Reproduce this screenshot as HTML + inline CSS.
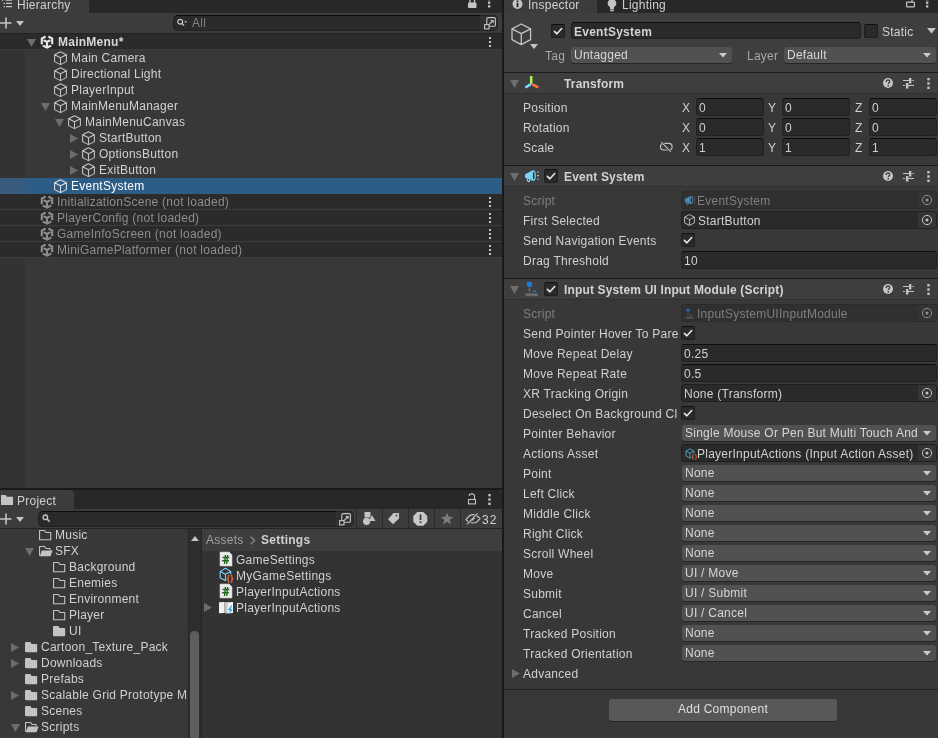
<!DOCTYPE html>
<html><head><meta charset="utf-8"><style>
*{margin:0;padding:0;box-sizing:border-box}
html,body{width:938px;height:738px;overflow:hidden;background:#191919;font-family:"Liberation Sans",sans-serif;font-size:12px;letter-spacing:.25px;color:#d0d0d0}
.a{position:absolute;display:block}
.t{position:absolute;white-space:nowrap;line-height:16px;height:16px;will-change:transform}
</style></head><body>
<div class="a" style="left:0px;top:0px;width:502px;height:488px;background:#383838"></div>
<div class="a" style="left:0px;top:0px;width:502px;height:13px;background:#282828"></div>
<div class="a" style="left:0px;top:0px;width:89px;height:13px;background:#3c3c3c"></div>
<svg class="a" style="left:0px;top:-1px;" width="13" height="10" viewBox="0 0 13 10"><path d="M2 1.2H3.4 M5.6 1.2H12 M3.6 4.4H5 M6 4.4H12 M3.6 7.6H5 M6 7.6H12" stroke="#c4c4c4" stroke-width="1.2"/></svg>
<div class="t" style="left:17px;top:-3px;">Hierarchy</div>
<svg class="a" style="left:468px;top:0px;" width="9" height="8" viewBox="0 0 9 8"><rect x="0" y="2.5" width="8.5" height="5.5" rx="1" fill="#c4c4c4"/><path d="M2 3V0 M6.5 3V0" stroke="#c4c4c4" stroke-width="1.3"/></svg>
<svg class="a" style="left:488px;top:-2px;" width="3" height="10" viewBox="0 0 3 10"><rect x="0" y="0" width="2.3" height="2.3" fill="#c4c4c4"/><rect x="0" y="3.6" width="2.3" height="2.3" fill="#c4c4c4"/><rect x="0" y="7.2" width="2.3" height="2.3" fill="#c4c4c4"/></svg>
<div class="a" style="left:0px;top:13px;width:502px;height:20px;background:#3c3c3c"></div>
<div class="a" style="left:0px;top:33px;width:502px;height:1px;background:#232323"></div>
<svg class="a" style="left:0px;top:17px;" width="12" height="12" viewBox="0 0 12 12"><path d="M6 0.5V11.5 M0 6H11.5" stroke="#c4c4c4" stroke-width="1.6"/></svg>
<svg class="a" style="left:16px;top:21px;" width="8" height="5" viewBox="0 0 8 5"><path d="M0 0H8L4 5Z" fill="#c4c4c4"/></svg>
<div class="a" style="left:173px;top:15px;width:308px;height:16px;background:#2a2a2a;border:1px solid #212121;border-top-color:#0d0d0d;border-right:none;border-radius:5px 0 0 5px"></div>
<div class="a" style="left:480px;top:15px;width:18px;height:16px;background:#303030;border:1px solid #222;border-left:none;border-radius:0 5px 5px 0"></div>
<svg class="a" style="left:177px;top:18px;" width="11" height="10" viewBox="0 0 11 10"><circle cx="3.2" cy="3.7" r="2.4" fill="none" stroke="#c4c4c4" stroke-width="1.3"/><path d="M4.8 5.3L7 7.6" stroke="#c4c4c4" stroke-width="1.4"/><path d="M7.2 3.2H10.2L8.7 4.9Z" fill="#c4c4c4"/></svg>
<div class="t" style="left:192px;top:15px;color:#808080">All</div>
<svg class="a" style="left:482px;top:15px;" width="16" height="16" viewBox="0 0 16 16"><rect x="4.8" y="2.6" width="8.6" height="8.6" rx="1.3" fill="none" stroke="#c4c4c4" stroke-width="1.1"/><rect x="2.6" y="9.6" width="4.4" height="4.3" fill="#303030" stroke="#c4c4c4" stroke-width="1.1"/><path d="M7 9.6L10.6 6" stroke="#c4c4c4" stroke-width="1.1"/><path d="M8.2 4.9H11.7V8.4Z" fill="#c4c4c4"/></svg>
<div class="a" style="left:0px;top:34px;width:502px;height:15px;background:#2a2a2a"></div>
<div class="a" style="left:0px;top:49px;width:502px;height:1px;background:#3b3b3b"></div>
<svg class="a" style="left:27px;top:39px;" width="9" height="8" viewBox="0 0 9 8"><path d="M0 0H9L4.5 8Z" fill="#6d6d6d"/></svg>
<svg class="a" style="left:38px;top:34px;" width="18" height="17" viewBox="0 0 18 17"><path d="M7.6 2.5L3.8 4.7V10.2 M10.4 2.5L14.2 4.7V10.2 M4.8 11.6L9 13.5L13.2 11.6 M5.6 6.1L9 8L12.4 6.1 M9 8V13" fill="none" stroke="#e8e8e8" stroke-width="2.1" stroke-linejoin="miter"/></svg>
<div class="t" style="left:58px;top:34px;font-weight:bold;color:#d8d8d8">MainMenu*</div>
<svg class="a" style="left:489px;top:37px;" width="2" height="10" viewBox="0 0 2 10"><rect x="0" y="0" width="2" height="2" fill="#c4c4c4"/><rect x="0" y="4" width="2" height="2" fill="#c4c4c4"/><rect x="0" y="8" width="2" height="2" fill="#c4c4c4"/></svg>
<div class="a" style="left:0px;top:50px;width:25px;height:438px;background:#333333"></div>
<svg class="a" style="left:54px;top:51px;" width="14" height="15" viewBox="0 0 14 15"><path d="M6.5 0.7L12.4 3.7V10.6L6.5 13.6L0.6 10.6V3.7Z M0.6 3.7L6.5 6.7L12.4 3.7 M6.5 6.7V13.6" fill="none" stroke="#c4c4c4" stroke-width="1.05" stroke-linejoin="round"/></svg>
<div class="t" style="left:71px;top:50px;">Main Camera</div>
<svg class="a" style="left:54px;top:67px;" width="14" height="15" viewBox="0 0 14 15"><path d="M6.5 0.7L12.4 3.7V10.6L6.5 13.6L0.6 10.6V3.7Z M0.6 3.7L6.5 6.7L12.4 3.7 M6.5 6.7V13.6" fill="none" stroke="#c4c4c4" stroke-width="1.05" stroke-linejoin="round"/></svg>
<div class="t" style="left:71px;top:66px;">Directional Light</div>
<svg class="a" style="left:54px;top:83px;" width="14" height="15" viewBox="0 0 14 15"><path d="M6.5 0.7L12.4 3.7V10.6L6.5 13.6L0.6 10.6V3.7Z M0.6 3.7L6.5 6.7L12.4 3.7 M6.5 6.7V13.6" fill="none" stroke="#c4c4c4" stroke-width="1.05" stroke-linejoin="round"/></svg>
<div class="t" style="left:71px;top:82px;">PlayerInput</div>
<svg class="a" style="left:41px;top:103px;" width="9" height="8" viewBox="0 0 9 8"><path d="M0 0H9L4.5 8Z" fill="#6d6d6d"/></svg>
<svg class="a" style="left:54px;top:99px;" width="14" height="15" viewBox="0 0 14 15"><path d="M6.5 0.7L12.4 3.7V10.6L6.5 13.6L0.6 10.6V3.7Z M0.6 3.7L6.5 6.7L12.4 3.7 M6.5 6.7V13.6" fill="none" stroke="#c4c4c4" stroke-width="1.05" stroke-linejoin="round"/></svg>
<div class="t" style="left:71px;top:98px;">MainMenuManager</div>
<svg class="a" style="left:55px;top:119px;" width="9" height="8" viewBox="0 0 9 8"><path d="M0 0H9L4.5 8Z" fill="#6d6d6d"/></svg>
<svg class="a" style="left:68px;top:115px;" width="14" height="15" viewBox="0 0 14 15"><path d="M6.5 0.7L12.4 3.7V10.6L6.5 13.6L0.6 10.6V3.7Z M0.6 3.7L6.5 6.7L12.4 3.7 M6.5 6.7V13.6" fill="none" stroke="#c4c4c4" stroke-width="1.05" stroke-linejoin="round"/></svg>
<div class="t" style="left:85px;top:114px;">MainMenuCanvas</div>
<svg class="a" style="left:70px;top:134px;" width="8" height="9" viewBox="0 0 8 9"><path d="M0 0L8 4.5L0 9Z" fill="#6d6d6d"/></svg>
<svg class="a" style="left:82px;top:131px;" width="14" height="15" viewBox="0 0 14 15"><path d="M6.5 0.7L12.4 3.7V10.6L6.5 13.6L0.6 10.6V3.7Z M0.6 3.7L6.5 6.7L12.4 3.7 M6.5 6.7V13.6" fill="none" stroke="#c4c4c4" stroke-width="1.05" stroke-linejoin="round"/></svg>
<div class="t" style="left:99px;top:130px;">StartButton</div>
<svg class="a" style="left:70px;top:150px;" width="8" height="9" viewBox="0 0 8 9"><path d="M0 0L8 4.5L0 9Z" fill="#6d6d6d"/></svg>
<svg class="a" style="left:82px;top:147px;" width="14" height="15" viewBox="0 0 14 15"><path d="M6.5 0.7L12.4 3.7V10.6L6.5 13.6L0.6 10.6V3.7Z M0.6 3.7L6.5 6.7L12.4 3.7 M6.5 6.7V13.6" fill="none" stroke="#c4c4c4" stroke-width="1.05" stroke-linejoin="round"/></svg>
<div class="t" style="left:99px;top:146px;">OptionsButton</div>
<svg class="a" style="left:70px;top:166px;" width="8" height="9" viewBox="0 0 8 9"><path d="M0 0L8 4.5L0 9Z" fill="#6d6d6d"/></svg>
<svg class="a" style="left:82px;top:163px;" width="14" height="15" viewBox="0 0 14 15"><path d="M6.5 0.7L12.4 3.7V10.6L6.5 13.6L0.6 10.6V3.7Z M0.6 3.7L6.5 6.7L12.4 3.7 M6.5 6.7V13.6" fill="none" stroke="#c4c4c4" stroke-width="1.05" stroke-linejoin="round"/></svg>
<div class="t" style="left:99px;top:162px;">ExitButton</div>
<div class="a" style="left:25px;top:178px;width:477px;height:16px;background:#2c5d87"></div>
<div class="a" style="left:0px;top:178px;width:25px;height:16px;background:#3a5b80"></div>
<svg class="a" style="left:54px;top:179px;" width="14" height="15" viewBox="0 0 14 15"><path d="M6.5 0.7L12.4 3.7V10.6L6.5 13.6L0.6 10.6V3.7Z M0.6 3.7L6.5 6.7L12.4 3.7 M6.5 6.7V13.6" fill="none" stroke="#e0e0e0" stroke-width="1.05" stroke-linejoin="round"/></svg>
<div class="t" style="left:71px;top:178px;color:#ffffff">EventSystem</div>
<div class="a" style="left:0px;top:194px;width:502px;height:16px;background:#2b2b2b"></div>
<div class="a" style="left:0px;top:209px;width:502px;height:1px;background:#3d3d3d"></div>
<svg class="a" style="left:38px;top:194px;" width="18" height="17" viewBox="0 0 18 17"><path d="M7.6 2.5L3.8 4.7V10.2 M10.4 2.5L14.2 4.7V10.2 M4.8 11.6L9 13.5L13.2 11.6 M5.6 6.1L9 8L12.4 6.1 M9 8V13" fill="none" stroke="#8d8d8d" stroke-width="2.1" stroke-linejoin="miter"/></svg>
<div class="t" style="left:57px;top:194px;color:#8d8d8d">InitializationScene (not loaded)</div>
<svg class="a" style="left:489px;top:197px;" width="2" height="10" viewBox="0 0 2 10"><rect x="0" y="0" width="2" height="2" fill="#c4c4c4"/><rect x="0" y="4" width="2" height="2" fill="#c4c4c4"/><rect x="0" y="8" width="2" height="2" fill="#c4c4c4"/></svg>
<div class="a" style="left:0px;top:210px;width:502px;height:16px;background:#2b2b2b"></div>
<div class="a" style="left:0px;top:225px;width:502px;height:1px;background:#3d3d3d"></div>
<svg class="a" style="left:38px;top:210px;" width="18" height="17" viewBox="0 0 18 17"><path d="M7.6 2.5L3.8 4.7V10.2 M10.4 2.5L14.2 4.7V10.2 M4.8 11.6L9 13.5L13.2 11.6 M5.6 6.1L9 8L12.4 6.1 M9 8V13" fill="none" stroke="#8d8d8d" stroke-width="2.1" stroke-linejoin="miter"/></svg>
<div class="t" style="left:57px;top:210px;color:#8d8d8d">PlayerConfig (not loaded)</div>
<svg class="a" style="left:489px;top:213px;" width="2" height="10" viewBox="0 0 2 10"><rect x="0" y="0" width="2" height="2" fill="#c4c4c4"/><rect x="0" y="4" width="2" height="2" fill="#c4c4c4"/><rect x="0" y="8" width="2" height="2" fill="#c4c4c4"/></svg>
<div class="a" style="left:0px;top:226px;width:502px;height:16px;background:#2b2b2b"></div>
<div class="a" style="left:0px;top:241px;width:502px;height:1px;background:#3d3d3d"></div>
<svg class="a" style="left:38px;top:226px;" width="18" height="17" viewBox="0 0 18 17"><path d="M7.6 2.5L3.8 4.7V10.2 M10.4 2.5L14.2 4.7V10.2 M4.8 11.6L9 13.5L13.2 11.6 M5.6 6.1L9 8L12.4 6.1 M9 8V13" fill="none" stroke="#8d8d8d" stroke-width="2.1" stroke-linejoin="miter"/></svg>
<div class="t" style="left:57px;top:226px;color:#8d8d8d">GameInfoScreen (not loaded)</div>
<svg class="a" style="left:489px;top:229px;" width="2" height="10" viewBox="0 0 2 10"><rect x="0" y="0" width="2" height="2" fill="#c4c4c4"/><rect x="0" y="4" width="2" height="2" fill="#c4c4c4"/><rect x="0" y="8" width="2" height="2" fill="#c4c4c4"/></svg>
<div class="a" style="left:0px;top:242px;width:502px;height:16px;background:#2b2b2b"></div>
<div class="a" style="left:0px;top:257px;width:502px;height:1px;background:#3d3d3d"></div>
<svg class="a" style="left:38px;top:242px;" width="18" height="17" viewBox="0 0 18 17"><path d="M7.6 2.5L3.8 4.7V10.2 M10.4 2.5L14.2 4.7V10.2 M4.8 11.6L9 13.5L13.2 11.6 M5.6 6.1L9 8L12.4 6.1 M9 8V13" fill="none" stroke="#8d8d8d" stroke-width="2.1" stroke-linejoin="miter"/></svg>
<div class="t" style="left:57px;top:242px;color:#8d8d8d">MiniGamePlatformer (not loaded)</div>
<svg class="a" style="left:489px;top:245px;" width="2" height="10" viewBox="0 0 2 10"><rect x="0" y="0" width="2" height="2" fill="#c4c4c4"/><rect x="0" y="4" width="2" height="2" fill="#c4c4c4"/><rect x="0" y="8" width="2" height="2" fill="#c4c4c4"/></svg>
<div class="a" style="left:502px;top:0px;width:2px;height:738px;background:#191919"></div>
<div class="a" style="left:0px;top:488px;width:502px;height:2px;background:#191919"></div>
<div class="a" style="left:0px;top:490px;width:502px;height:248px;background:#383838"></div>
<div class="a" style="left:0px;top:490px;width:502px;height:19px;background:#282828;border-radius:0 4px 0 0"></div>
<div class="a" style="left:0px;top:490px;width:74px;height:19px;background:#3c3c3c;border-radius:0 4px 0 0"></div>
<svg class="a" style="left:1px;top:495px;" width="12" height="10" viewBox="0 0 12 10"><path d="M0 0H4.5L6 1.8H12V10H0Z" fill="#c4c4c4"/></svg>
<div class="t" style="left:17px;top:493px;">Project</div>
<svg class="a" style="left:466px;top:493px;" width="11" height="12" viewBox="0 0 11 12"><path d="M3.3 2.9V2.6C3.3 1.4 4.3 0.9 5.5 0.9C6.7 0.9 8.5 1.4 8.5 2.9V6" fill="none" stroke="#c4c4c4" stroke-width="1.1"/><rect x="2.5" y="6.5" width="7" height="4.4" fill="none" stroke="#c4c4c4" stroke-width="1.1"/></svg>
<svg class="a" style="left:488px;top:494px;" width="3" height="11" viewBox="0 0 3 11"><rect x="0.3" y="0" width="2.4" height="2.4" fill="#c4c4c4"/><rect x="0.3" y="4.3" width="2.4" height="2.4" fill="#c4c4c4"/><rect x="0.3" y="8.6" width="2.4" height="2.4" fill="#c4c4c4"/></svg>
<div class="a" style="left:0px;top:529px;width:188px;height:209px;background:#383838"></div>
<svg class="a" style="left:39px;top:530px;" width="13" height="11" viewBox="0 0 13 11"><path d="M0.55 0.55H5.6L7 2.55H11.75V9.75H0.55Z" fill="none" stroke="#c4c4c4" stroke-width="1.1" stroke-linejoin="round"/></svg>
<div class="t" style="left:55px;top:527px;">Music</div>
<svg class="a" style="left:25px;top:548px;" width="9" height="8" viewBox="0 0 9 8"><path d="M0 0H9L4.5 8Z" fill="#6d6d6d"/></svg>
<svg class="a" style="left:39px;top:546px;" width="14" height="11" viewBox="0 0 14 11"><path d="M0.55 9.8V0.55H5.6L7 2.55H11V4.3" fill="none" stroke="#c4c4c4" stroke-width="1.1" stroke-linejoin="round"/><path d="M0.8 10.2L2.9 4.6H13.6L11.5 10.2Z" fill="#c4c4c4"/></svg>
<div class="t" style="left:55px;top:543px;">SFX</div>
<svg class="a" style="left:53px;top:562px;" width="13" height="11" viewBox="0 0 13 11"><path d="M0.55 0.55H5.6L7 2.55H11.75V9.75H0.55Z" fill="none" stroke="#c4c4c4" stroke-width="1.1" stroke-linejoin="round"/></svg>
<div class="t" style="left:69px;top:559px;">Background</div>
<svg class="a" style="left:53px;top:578px;" width="13" height="11" viewBox="0 0 13 11"><path d="M0.55 0.55H5.6L7 2.55H11.75V9.75H0.55Z" fill="none" stroke="#c4c4c4" stroke-width="1.1" stroke-linejoin="round"/></svg>
<div class="t" style="left:69px;top:575px;">Enemies</div>
<svg class="a" style="left:53px;top:594px;" width="13" height="11" viewBox="0 0 13 11"><path d="M0.55 0.55H5.6L7 2.55H11.75V9.75H0.55Z" fill="none" stroke="#c4c4c4" stroke-width="1.1" stroke-linejoin="round"/></svg>
<div class="t" style="left:69px;top:591px;">Environment</div>
<svg class="a" style="left:53px;top:610px;" width="13" height="11" viewBox="0 0 13 11"><path d="M0.55 0.55H5.6L7 2.55H11.75V9.75H0.55Z" fill="none" stroke="#c4c4c4" stroke-width="1.1" stroke-linejoin="round"/></svg>
<div class="t" style="left:69px;top:607px;">Player</div>
<svg class="a" style="left:53px;top:626px;" width="13" height="11" viewBox="0 0 13 11"><path d="M1 0H5.4L6.6 2H11.2Q12.2 2 12.2 3V9.2Q12.2 10.2 11.2 10.2H1Q0 10.2 0 9.2V1Q0 0 1 0Z" fill="#c4c4c4"/></svg>
<div class="t" style="left:69px;top:623px;">UI</div>
<svg class="a" style="left:11px;top:643px;" width="8" height="9" viewBox="0 0 8 9"><path d="M0 0L8 4.5L0 9Z" fill="#6d6d6d"/></svg>
<svg class="a" style="left:25px;top:642px;" width="13" height="11" viewBox="0 0 13 11"><path d="M1 0H5.4L6.6 2H11.2Q12.2 2 12.2 3V9.2Q12.2 10.2 11.2 10.2H1Q0 10.2 0 9.2V1Q0 0 1 0Z" fill="#c4c4c4"/></svg>
<div class="t" style="left:41px;top:639px;">Cartoon_Texture_Pack</div>
<svg class="a" style="left:11px;top:659px;" width="8" height="9" viewBox="0 0 8 9"><path d="M0 0L8 4.5L0 9Z" fill="#6d6d6d"/></svg>
<svg class="a" style="left:25px;top:658px;" width="13" height="11" viewBox="0 0 13 11"><path d="M1 0H5.4L6.6 2H11.2Q12.2 2 12.2 3V9.2Q12.2 10.2 11.2 10.2H1Q0 10.2 0 9.2V1Q0 0 1 0Z" fill="#c4c4c4"/></svg>
<div class="t" style="left:41px;top:655px;">Downloads</div>
<svg class="a" style="left:25px;top:674px;" width="13" height="11" viewBox="0 0 13 11"><path d="M1 0H5.4L6.6 2H11.2Q12.2 2 12.2 3V9.2Q12.2 10.2 11.2 10.2H1Q0 10.2 0 9.2V1Q0 0 1 0Z" fill="#c4c4c4"/></svg>
<div class="t" style="left:41px;top:671px;">Prefabs</div>
<svg class="a" style="left:11px;top:691px;" width="8" height="9" viewBox="0 0 8 9"><path d="M0 0L8 4.5L0 9Z" fill="#6d6d6d"/></svg>
<svg class="a" style="left:25px;top:690px;" width="13" height="11" viewBox="0 0 13 11"><path d="M1 0H5.4L6.6 2H11.2Q12.2 2 12.2 3V9.2Q12.2 10.2 11.2 10.2H1Q0 10.2 0 9.2V1Q0 0 1 0Z" fill="#c4c4c4"/></svg>
<div class="t" style="left:41px;top:687px;">Scalable Grid Prototype M</div>
<svg class="a" style="left:25px;top:706px;" width="13" height="11" viewBox="0 0 13 11"><path d="M1 0H5.4L6.6 2H11.2Q12.2 2 12.2 3V9.2Q12.2 10.2 11.2 10.2H1Q0 10.2 0 9.2V1Q0 0 1 0Z" fill="#c4c4c4"/></svg>
<div class="t" style="left:41px;top:703px;">Scenes</div>
<svg class="a" style="left:11px;top:724px;" width="9" height="8" viewBox="0 0 9 8"><path d="M0 0H9L4.5 8Z" fill="#6d6d6d"/></svg>
<svg class="a" style="left:25px;top:722px;" width="14" height="11" viewBox="0 0 14 11"><path d="M0.55 9.8V0.55H5.6L7 2.55H11V4.3" fill="none" stroke="#c4c4c4" stroke-width="1.1" stroke-linejoin="round"/><path d="M0.8 10.2L2.9 4.6H13.6L11.5 10.2Z" fill="#c4c4c4"/></svg>
<div class="t" style="left:41px;top:719px;">Scripts</div>
<div class="a" style="left:188px;top:529px;width:13px;height:209px;background:#2e2e2e;border-left:1px solid #262626"></div>
<svg class="a" style="left:191px;top:536px;" width="8" height="5" viewBox="0 0 8 5"><path d="M0 5H8L4 0Z" fill="#c4c4c4"/></svg>
<div class="a" style="left:190px;top:631px;width:9px;height:110px;background:#5e5e5e;border-radius:5px"></div>
<div class="a" style="left:201px;top:529px;width:1px;height:209px;background:#232323"></div>
<div class="a" style="left:202px;top:529px;width:300px;height:209px;background:#333333"></div>
<div class="a" style="left:202px;top:529px;width:300px;height:22px;background:#3e3e3e"></div>
<div class="t" style="left:206px;top:532px;color:#a0a0a0">Assets</div>
<svg class="a" style="left:250px;top:536px;" width="6" height="9" viewBox="0 0 6 9"><path d="M0.7 0.7L4.7 4.5L0.7 8.3" fill="none" stroke="#8a8a8a" stroke-width="1.2"/></svg>
<div class="t" style="left:261px;top:532px;font-weight:bold;color:#d0d0d0">Settings</div>
<svg class="a" style="left:216px;top:550px;" width="20" height="18" viewBox="0 0 20 18"><path d="M4.2 2.2H13.2L15.8 4.9V15.8H4.2Z" fill="#ebebeb" stroke="#f8f8f8" stroke-width="0.8" stroke-linejoin="round"/><path d="M9.4 5L8.5 14 M11.6 5L10.7 14 M6.6 7.5H13.3 M6.2 10.7H12.8" stroke="#1b661b" stroke-width="1.35"/></svg>
<div class="t" style="left:236px;top:552px;">GameSettings</div>
<svg class="a" style="left:216px;top:566px;" width="22" height="18" viewBox="0 0 22 18"><path d="M9.5 2.3L14.7 5.4V12L9.5 14.6L4.2 12V5.4Z M4.2 5.4L9.5 8.3L14.7 5.4 M9.5 8.3V14.6" fill="none" stroke="#7dd3f7" stroke-width="1.1" stroke-linejoin="round"/><rect x="10.4" y="8.2" width="8.4" height="9" fill="#333333"/><path d="M13.5 9.2H13C12.5 9.2 12.3 9.5 12.3 10.1V11.9L11.4 12.7L12.3 13.5V15.3C12.3 15.9 12.5 16.2 13 16.2H13.5 M14.7 9.2H15.2C15.7 9.2 15.9 9.5 15.9 10.1V11.9L16.8 12.7L15.9 13.5V15.3C15.9 15.9 15.7 16.2 15.2 16.2H14.7" fill="none" stroke="#f26b3a" stroke-width="1.2"/></svg>
<div class="t" style="left:236px;top:568px;">MyGameSettings</div>
<svg class="a" style="left:216px;top:582px;" width="20" height="18" viewBox="0 0 20 18"><path d="M4.2 2.2H13.2L15.8 4.9V15.8H4.2Z" fill="#ebebeb" stroke="#f8f8f8" stroke-width="0.8" stroke-linejoin="round"/><path d="M9.4 5L8.5 14 M11.6 5L10.7 14 M6.6 7.5H13.3 M6.2 10.7H12.8" stroke="#1b661b" stroke-width="1.35"/></svg>
<div class="t" style="left:236px;top:584px;">PlayerInputActions</div>
<svg class="a" style="left:214px;top:599px;" width="22" height="18" viewBox="0 0 22 18"><defs><linearGradient id="mg" x1="0" x2="1"><stop offset="0" stop-color="#a8a8a8"/><stop offset="1" stop-color="#e0e0e0"/></linearGradient></defs><path d="M5 3.2L10 2.9V14L5 14.2Z" fill="#f2f2f2"/><path d="M10 2.9L14 3.3V14.4L10 14Z" fill="url(#mg)"/><path d="M14 3.3L19 2.9V14L14 14.4Z" fill="#f4f4f4"/><path d="M17.2 6.6L13.9 11L16.1 11.3L15 15.2L18.6 10.3L16.5 10L18.2 6.6Z" fill="#1ea5dc"/></svg>
<svg class="a" style="left:204px;top:603px;" width="8" height="9" viewBox="0 0 8 9"><path d="M0 0L8 4.5L0 9Z" fill="#6d6d6d"/></svg>
<div class="t" style="left:236px;top:600px;">PlayerInputActions</div>
<div class="a" style="left:0px;top:509px;width:502px;height:20px;background:#3c3c3c"></div>
<div class="a" style="left:0px;top:528px;width:502px;height:1px;background:#242424"></div>
<svg class="a" style="left:0px;top:513px;" width="12" height="12" viewBox="0 0 12 12"><path d="M6 0.5V11.5 M0 6H11.5" stroke="#c4c4c4" stroke-width="1.6"/></svg>
<svg class="a" style="left:16px;top:517px;" width="8" height="5" viewBox="0 0 8 5"><path d="M0 0H8L4 5Z" fill="#c4c4c4"/></svg>
<div class="a" style="left:38px;top:511px;width:299px;height:16px;background:#2a2a2a;border:1px solid #212121;border-top-color:#0d0d0d;border-right:none;border-radius:5px 0 0 5px"></div>
<div class="a" style="left:336px;top:511px;width:18px;height:16px;background:#303030;border:1px solid #222;border-left:none;border-radius:0 5px 5px 0"></div>
<svg class="a" style="left:42px;top:514px;" width="9" height="9" viewBox="0 0 9 9"><circle cx="3.3" cy="3.3" r="2.3" fill="none" stroke="#c4c4c4" stroke-width="1.3"/><path d="M4.9 4.9L7.6 7.6" stroke="#c4c4c4" stroke-width="1.5"/></svg>
<svg class="a" style="left:337px;top:511px;" width="16" height="16" viewBox="0 0 16 16"><rect x="4.8" y="2.6" width="8.6" height="8.6" rx="1.3" fill="none" stroke="#c4c4c4" stroke-width="1.1"/><rect x="2.6" y="9.6" width="4.4" height="4.3" fill="#303030" stroke="#c4c4c4" stroke-width="1.1"/><path d="M7 9.6L10.6 6" stroke="#c4c4c4" stroke-width="1.1"/><path d="M8.2 4.9H11.7V8.4Z" fill="#c4c4c4"/></svg>
<div class="a" style="left:356px;top:509px;width:1px;height:20px;background:#2a2a2a"></div>
<div class="a" style="left:382px;top:509px;width:1px;height:20px;background:#2a2a2a"></div>
<div class="a" style="left:408px;top:509px;width:1px;height:20px;background:#2a2a2a"></div>
<div class="a" style="left:434px;top:509px;width:1px;height:20px;background:#2a2a2a"></div>
<div class="a" style="left:460px;top:509px;width:1px;height:20px;background:#2a2a2a"></div>
<svg class="a" style="left:363px;top:511px;" width="14" height="15" viewBox="0 0 14 15"><rect x="1.5" y="1" width="6" height="5.5" fill="#c4c4c4"/><circle cx="3.6" cy="10.3" r="3.6" fill="#c4c4c4"/><path d="M9 4.2L12.5 10H5.8Z" fill="#c4c4c4"/></svg>
<svg class="a" style="left:388px;top:512px;" width="12" height="13" viewBox="0 0 12 13"><path d="M5.5 1H11V6.5L5 12.3L0 7.3Z" fill="#c4c4c4"/><circle cx="8.5" cy="3.5" r="0.9" fill="#3c3c3c"/></svg>
<svg class="a" style="left:413px;top:511px;" width="15" height="15" viewBox="0 0 15 15"><path d="M4.3 1H10.3L14.3 5V10.8L10.3 14.8H4.3L0.3 10.8V5Z" fill="#c8c8c8"/><rect x="6.6" y="3.5" width="1.8" height="5.5" fill="#3c3c3c"/><rect x="6.6" y="10.3" width="1.8" height="1.8" fill="#3c3c3c"/></svg>
<svg class="a" style="left:440px;top:512px;" width="14" height="13" viewBox="0 0 14 13"><path d="M7 0.5L8.7 4.8L13.3 5L9.7 7.9L11 12.4L7 9.8L3 12.4L4.3 7.9L0.7 5L5.3 4.8Z" fill="#7c7c7c"/></svg>
<svg class="a" style="left:465px;top:512px;" width="16" height="14" viewBox="0 0 16 14"><path d="M1 7.6C3 4.6 5.6 2.6 8.2 2.6C10.6 2.6 13 4.4 15 6.6C13 9.2 10.6 11 8.2 11C5.6 11 3 9.8 1 7.6Z" fill="none" stroke="#c4c4c4" stroke-width="1.1"/><path d="M2 12.4L12.6 1.3" stroke="#3c3c3c" stroke-width="2.4"/><path d="M2 12.4L12.6 1.3" stroke="#c4c4c4" stroke-width="1.1"/><path d="M6.6 8.6L9.4 6" stroke="#c4c4c4" stroke-width="1.3"/></svg>
<div class="t" style="left:482px;top:512px;letter-spacing:1.2px">32</div>
<div class="a" style="left:504px;top:0px;width:434px;height:738px;background:#383838"></div>
<div class="a" style="left:504px;top:0px;width:434px;height:13px;background:#282828"></div>
<div class="a" style="left:504px;top:0px;width:93px;height:13px;background:#3c3c3c"></div>
<svg class="a" style="left:512px;top:-1px;" width="11" height="11" viewBox="0 0 11 11"><circle cx="5.5" cy="5" r="5" fill="#c4c4c4"/><rect x="4.6" y="4" width="1.8" height="4.2" fill="#282828"/><rect x="4.6" y="1.5" width="1.8" height="1.7" fill="#282828"/></svg>
<div class="t" style="left:528px;top:-3px;">Inspector</div>
<svg class="a" style="left:607px;top:-1px;" width="10" height="13" viewBox="0 0 10 13"><circle cx="5" cy="4.3" r="4.3" fill="#c4c4c4"/><rect x="3" y="7" width="4" height="3.5" fill="#c4c4c4"/><rect x="3.3" y="11" width="3.4" height="1.3" fill="#c4c4c4"/></svg>
<div class="t" style="left:622px;top:-3px;">Lighting</div>
<svg class="a" style="left:906px;top:-1px;" width="9" height="9" viewBox="0 0 9 9"><path d="M6 3V0" stroke="#c4c4c4" stroke-width="1.2"/><rect x="0.6" y="3.2" width="7.8" height="4.6" rx="0.6" fill="none" stroke="#c4c4c4" stroke-width="1.2"/></svg>
<svg class="a" style="left:926px;top:-2px;" width="3" height="10" viewBox="0 0 3 10"><rect x="0" y="0" width="2.3" height="2.3" fill="#c4c4c4"/><rect x="0" y="3.6" width="2.3" height="2.3" fill="#c4c4c4"/><rect x="0" y="7.2" width="2.3" height="2.3" fill="#c4c4c4"/></svg>
<div class="a" style="left:504px;top:13px;width:434px;height:59px;background:#3e3e3e"></div>
<svg class="a" style="left:511px;top:23px;" width="21" height="23" viewBox="0 0 21 23"><path d="M10.3 1L19.6 5.8V16.6L10.3 21.6L1 16.6V5.8Z M1 5.8L10.3 10.7L19.6 5.8 M10.3 10.7V21.6" fill="none" stroke="#c4c4c4" stroke-width="1.3" stroke-linejoin="round"/></svg>
<svg class="a" style="left:530px;top:44px;" width="9" height="5" viewBox="0 0 9 5"><path d="M0 0H8L4 5Z" fill="#c4c4c4"/></svg>
<div class="a" style="left:551px;top:24px;width:14px;height:14px;background:#2a2a2a;border:1px solid #1e1e1e;border-top-color:#0f0f0f;border-radius:2px"></div>
<svg class="a" style="left:551px;top:24px;" width="14" height="14" viewBox="0 0 14 14"><path d="M3.4 7.4L5.9 9.8L10.7 4.5" fill="none" stroke="#e4e4e4" stroke-width="1.6" stroke-linecap="round" stroke-linejoin="round"/></svg>
<div class="a" style="left:571px;top:22px;width:290px;height:17px;background:#2a2a2a;border:1px solid #212121;border-top-color:#0d0d0d;border-radius:3px"></div>
<div class="t" style="left:574px;top:24px;font-weight:bold;color:#d2d2d2">EventSystem</div>
<div class="a" style="left:864px;top:24px;width:14px;height:14px;background:#2a2a2a;border:1px solid #1e1e1e;border-top-color:#0f0f0f;border-radius:2px"></div>
<div class="t" style="left:882px;top:24px;">Static</div>
<svg class="a" style="left:927px;top:28px;" width="9" height="6" viewBox="0 0 9 6"><path d="M0 0H9L4.5 5.5Z" fill="#c4c4c4"/></svg>
<div class="t" style="left:545px;top:48px;color:#a8a8a8">Tag</div>
<div class="a" style="left:571px;top:47px;width:161px;height:16px;background:#515151;border-radius:3px;box-shadow:0 1px 0 #262626"></div>
<div class="t" style="left:574px;top:47px;color:#d6d6d6">Untagged</div>
<svg class="a" style="left:719px;top:53px;" width="8" height="5" viewBox="0 0 8 5"><path d="M0 0H8L4 4.6Z" fill="#cccccc"/></svg>
<div class="t" style="left:747px;top:48px;color:#a8a8a8">Layer</div>
<div class="a" style="left:784px;top:47px;width:152px;height:16px;background:#515151;border-radius:3px;box-shadow:0 1px 0 #262626"></div>
<div class="t" style="left:787px;top:47px;color:#d6d6d6">Default</div>
<svg class="a" style="left:923px;top:53px;" width="8" height="5" viewBox="0 0 8 5"><path d="M0 0H8L4 4.6Z" fill="#cccccc"/></svg>
<div class="a" style="left:504px;top:72px;width:434px;height:1px;background:#1a1a1a"></div>
<div class="a" style="left:504px;top:73px;width:434px;height:20px;background:#3e3e3e"></div>
<div class="a" style="left:504px;top:93px;width:434px;height:1px;background:#2f2f2f"></div>
<svg class="a" style="left:510px;top:80px;" width="9" height="8" viewBox="0 0 9 8"><path d="M0 0H9L4.5 8Z" fill="#6d6d6d"/></svg>
<svg class="a" style="left:525px;top:76px;" width="15" height="13" viewBox="0 0 15 13"><path d="M6.2 0.8V6.8" stroke="#a6f54a" stroke-width="2.6" stroke-linecap="round"/><path d="M1.3 11L5 8.7" stroke="#80d8ff" stroke-width="2.6" stroke-linecap="round"/><path d="M8 8.7L12.4 11" stroke="#ff6e3a" stroke-width="2.6" stroke-linecap="round"/></svg>
<div class="t" style="left:564px;top:76px;font-weight:bold;color:#d2d2d2;letter-spacing:.15px">Transform</div>
<svg class="a" style="left:883px;top:78px;" width="11" height="11" viewBox="0 0 11 11"><circle cx="5" cy="5" r="5" fill="#c4c4c4"/><path d="M3.2 3.9C3.2 2.6 4.1 2 5 2C6 2 6.8 2.6 6.8 3.6C6.8 4.7 5.3 4.8 5.3 6" fill="none" stroke="#3e3e3e" stroke-width="1.3"/><rect x="4.5" y="7" width="1.5" height="1.5" fill="#3e3e3e"/></svg>
<svg class="a" style="left:903px;top:78px;" width="12" height="11" viewBox="0 0 12 11"><path d="M0 2.5H11 M0 7.5H11" stroke="#c4c4c4" stroke-width="1.1"/><rect x="6" y="0" width="2.4" height="5.5" fill="#c4c4c4"/><rect x="3" y="5" width="2.4" height="5.5" fill="#c4c4c4"/><rect x="1.9" y="6.6" width="0.9" height="1.8" fill="#3e3e3e"/><rect x="8.6" y="1.6" width="0.9" height="1.8" fill="#3e3e3e"/></svg>
<svg class="a" style="left:927px;top:77.5px;" width="3" height="11" viewBox="0 0 3 11"><rect x="0.3" y="0" width="2.4" height="2.4" fill="#c4c4c4"/><rect x="0.3" y="4.3" width="2.4" height="2.4" fill="#c4c4c4"/><rect x="0.3" y="8.6" width="2.4" height="2.4" fill="#c4c4c4"/></svg>
<div class="t" style="left:523px;top:100px;">Position</div>
<div class="t" style="left:682px;top:100px;">X</div>
<div class="a" style="left:696px;top:98px;width:68px;height:18px;background:#2a2a2a;border:1px solid #212121;border-top-color:#0d0d0d;border-radius:3px;"></div>
<div class="t" style="left:699px;top:100px;">0</div>
<div class="t" style="left:768px;top:100px;">Y</div>
<div class="a" style="left:782px;top:98px;width:68px;height:18px;background:#2a2a2a;border:1px solid #212121;border-top-color:#0d0d0d;border-radius:3px;"></div>
<div class="t" style="left:785px;top:100px;">0</div>
<div class="t" style="left:855px;top:100px;">Z</div>
<div class="a" style="left:869px;top:98px;width:68px;height:18px;background:#2a2a2a;border:1px solid #212121;border-top-color:#0d0d0d;border-radius:3px;"></div>
<div class="t" style="left:872px;top:100px;">0</div>
<div class="t" style="left:523px;top:120px;">Rotation</div>
<div class="t" style="left:682px;top:120px;">X</div>
<div class="a" style="left:696px;top:118px;width:68px;height:18px;background:#2a2a2a;border:1px solid #212121;border-top-color:#0d0d0d;border-radius:3px;"></div>
<div class="t" style="left:699px;top:120px;">0</div>
<div class="t" style="left:768px;top:120px;">Y</div>
<div class="a" style="left:782px;top:118px;width:68px;height:18px;background:#2a2a2a;border:1px solid #212121;border-top-color:#0d0d0d;border-radius:3px;"></div>
<div class="t" style="left:785px;top:120px;">0</div>
<div class="t" style="left:855px;top:120px;">Z</div>
<div class="a" style="left:869px;top:118px;width:68px;height:18px;background:#2a2a2a;border:1px solid #212121;border-top-color:#0d0d0d;border-radius:3px;"></div>
<div class="t" style="left:872px;top:120px;">0</div>
<div class="t" style="left:523px;top:140px;">Scale</div>
<div class="t" style="left:682px;top:140px;">X</div>
<div class="a" style="left:696px;top:138px;width:68px;height:18px;background:#2a2a2a;border:1px solid #212121;border-top-color:#0d0d0d;border-radius:3px;"></div>
<div class="t" style="left:699px;top:140px;">1</div>
<div class="t" style="left:768px;top:140px;">Y</div>
<div class="a" style="left:782px;top:138px;width:68px;height:18px;background:#2a2a2a;border:1px solid #212121;border-top-color:#0d0d0d;border-radius:3px;"></div>
<div class="t" style="left:785px;top:140px;">1</div>
<div class="t" style="left:855px;top:140px;">Z</div>
<div class="a" style="left:869px;top:138px;width:68px;height:18px;background:#2a2a2a;border:1px solid #212121;border-top-color:#0d0d0d;border-radius:3px;"></div>
<div class="t" style="left:872px;top:140px;">1</div>
<svg class="a" style="left:658px;top:140px;" width="16" height="14" viewBox="0 0 16 14"><rect x="2.5" y="3.4" width="11.6" height="6.6" rx="3.3" fill="none" stroke="#c4c4c4" stroke-width="1.1"/><path d="M3.2 2.1L12.8 11.7" stroke="#383838" stroke-width="2.6"/><path d="M3.2 2.1L12.8 11.7" stroke="#c4c4c4" stroke-width="1.1"/></svg>
<div class="a" style="left:504px;top:165px;width:434px;height:1px;background:#1a1a1a"></div>
<div class="a" style="left:504px;top:166px;width:434px;height:20px;background:#3e3e3e"></div>
<div class="a" style="left:504px;top:186px;width:434px;height:1px;background:#2f2f2f"></div>
<svg class="a" style="left:510px;top:173px;" width="9" height="8" viewBox="0 0 9 8"><path d="M0 0H9L4.5 8Z" fill="#6d6d6d"/></svg>
<svg class="a" style="left:524px;top:169px;" width="16" height="15" viewBox="0 0 16 15"><path d="M1 5.3L6.5 2.4C7.6 1.8 8.5 1.2 9.6 1.2C11.1 1.2 11.9 3.6 11.9 6.6C11.9 9.6 11.1 12 9.6 12C8.5 12 7.6 11.4 6.5 10.8L1 8.6Z" fill="#79d4f7"/><ellipse cx="9.7" cy="6.6" rx="0.9" ry="4" fill="#3e3e3e"/><path d="M2.9 9.2L3.8 12C4.1 12.9 5.6 12.8 5.7 11.8L5.2 10.2" fill="none" stroke="#79d4f7" stroke-width="1.1"/><path d="M13.1 3.6L14.6 2.6 M13.1 6.6H15 M13.1 9.6L14.6 10.6" stroke="#c4c4c4" stroke-width="1.1"/></svg>
<div class="a" style="left:544px;top:169px;width:14px;height:14px;background:#2a2a2a;border:1px solid #1e1e1e;border-top-color:#0f0f0f;border-radius:2px"></div>
<svg class="a" style="left:544px;top:169px;" width="14" height="14" viewBox="0 0 14 14"><path d="M3.4 7.4L5.9 9.8L10.7 4.5" fill="none" stroke="#e4e4e4" stroke-width="1.6" stroke-linecap="round" stroke-linejoin="round"/></svg>
<div class="t" style="left:564px;top:169px;font-weight:bold;color:#d2d2d2;letter-spacing:.15px">Event System</div>
<svg class="a" style="left:883px;top:171px;" width="11" height="11" viewBox="0 0 11 11"><circle cx="5" cy="5" r="5" fill="#c4c4c4"/><path d="M3.2 3.9C3.2 2.6 4.1 2 5 2C6 2 6.8 2.6 6.8 3.6C6.8 4.7 5.3 4.8 5.3 6" fill="none" stroke="#3e3e3e" stroke-width="1.3"/><rect x="4.5" y="7" width="1.5" height="1.5" fill="#3e3e3e"/></svg>
<svg class="a" style="left:903px;top:171px;" width="12" height="11" viewBox="0 0 12 11"><path d="M0 2.5H11 M0 7.5H11" stroke="#c4c4c4" stroke-width="1.1"/><rect x="6" y="0" width="2.4" height="5.5" fill="#c4c4c4"/><rect x="3" y="5" width="2.4" height="5.5" fill="#c4c4c4"/><rect x="1.9" y="6.6" width="0.9" height="1.8" fill="#3e3e3e"/><rect x="8.6" y="1.6" width="0.9" height="1.8" fill="#3e3e3e"/></svg>
<svg class="a" style="left:927px;top:170.5px;" width="3" height="11" viewBox="0 0 3 11"><rect x="0.3" y="0" width="2.4" height="2.4" fill="#c4c4c4"/><rect x="0.3" y="4.3" width="2.4" height="2.4" fill="#c4c4c4"/><rect x="0.3" y="8.6" width="2.4" height="2.4" fill="#c4c4c4"/></svg>
<div class="t" style="left:523px;top:193px;color:#7f7f7f">Script</div>
<div class="a" style="left:681px;top:191px;width:256px;height:18px;background:#303030;border:1px solid #2b2b2b;border-radius:3px;"></div>
<div class="a" style="left:918px;top:192px;width:18px;height:16px;background:#333333;border-radius:0 2px 2px 0"></div>
<svg class="a" style="left:921px;top:194px;" width="12" height="12" viewBox="0 0 12 12"><circle cx="6" cy="6" r="4.6" fill="none" stroke="#8f8f8f" stroke-width="1"/><circle cx="6" cy="6" r="1.5" fill="#8f8f8f"/></svg>
<svg class="a" style="left:684px;top:195px;" width="13" height="12" viewBox="0 0 13 12"><g transform="scale(0.76)"><path d="M1 5.3L6.5 2.4C7.6 1.8 8.5 1.2 9.6 1.2C11.1 1.2 11.9 3.6 11.9 6.6C11.9 9.6 11.1 12 9.6 12C8.5 12 7.6 11.4 6.5 10.8L1 8.6Z" fill="#4a88a6"/><ellipse cx="9.7" cy="6.6" rx="1" ry="4" fill="#303030"/><path d="M2.9 9.2L3.8 12C4.1 12.9 5.6 12.8 5.7 11.8L5.2 10.2" fill="none" stroke="#4a88a6" stroke-width="1.3"/><path d="M13.1 3.6L14.6 2.6 M13.1 6.6H15 M13.1 9.6L14.6 10.6" stroke="#707070" stroke-width="1.3"/></g></svg>
<div class="t" style="left:697px;top:193px;color:#7f7f7f">EventSystem</div>
<div class="t" style="left:523px;top:213px;">First Selected</div>
<div class="a" style="left:681px;top:211px;width:256px;height:18px;background:#2a2a2a;border:1px solid #1f1f1f;border-radius:3px;"></div>
<div class="a" style="left:918px;top:212px;width:18px;height:16px;background:#353535;border-radius:0 2px 2px 0"></div>
<svg class="a" style="left:921px;top:214px;" width="12" height="12" viewBox="0 0 12 12"><circle cx="6" cy="6" r="4.6" fill="none" stroke="#c4c4c4" stroke-width="1"/><circle cx="6" cy="6" r="1.5" fill="#c4c4c4"/></svg>
<svg class="a" style="left:684px;top:214px;" width="11" height="12" viewBox="0 0 11 12"><path d="M5.5 0.6L10.4 3.1V8.9L5.5 11.4L0.6 8.9V3.1Z M0.6 3.1L5.5 5.6L10.4 3.1 M5.5 5.6V11.4" fill="none" stroke="#c4c4c4" stroke-width="0.9"/></svg>
<div class="t" style="left:698px;top:213px;">StartButton</div>
<div class="t" style="left:523px;top:233px;">Send Navigation Events</div>
<div class="a" style="left:681px;top:233px;width:14px;height:14px;background:#2a2a2a;border:1px solid #1e1e1e;border-top-color:#0f0f0f;border-radius:2px"></div>
<svg class="a" style="left:681px;top:233px;" width="14" height="14" viewBox="0 0 14 14"><path d="M3.4 7.4L5.9 9.8L10.7 4.5" fill="none" stroke="#e4e4e4" stroke-width="1.6" stroke-linecap="round" stroke-linejoin="round"/></svg>
<div class="t" style="left:523px;top:253px;">Drag Threshold</div>
<div class="a" style="left:681px;top:251px;width:256px;height:18px;background:#2a2a2a;border:1px solid #212121;border-top-color:#0d0d0d;border-radius:3px;"></div>
<div class="t" style="left:684px;top:253px;">10</div>
<div class="a" style="left:504px;top:278px;width:434px;height:1px;background:#1a1a1a"></div>
<div class="a" style="left:504px;top:279px;width:434px;height:20px;background:#3e3e3e"></div>
<div class="a" style="left:504px;top:299px;width:434px;height:1px;background:#2f2f2f"></div>
<svg class="a" style="left:510px;top:286px;" width="9" height="8" viewBox="0 0 9 8"><path d="M0 0H9L4.5 8Z" fill="#6d6d6d"/></svg>
<svg class="a" style="left:525px;top:281px;" width="15" height="17" viewBox="0 0 15 17"><circle cx="4.4" cy="3.3" r="2.8" fill="#1f78dc"/><rect x="3.7" y="6.6" width="1.4" height="4" fill="#6a6a6a"/><rect x="7.8" y="9.5" width="3.4" height="1.4" fill="#1f78dc"/><path d="M0.5 12.3H12.2L13.5 15.2H0.5Z" fill="#6a6a6a"/></svg>
<div class="a" style="left:544px;top:282px;width:14px;height:14px;background:#2a2a2a;border:1px solid #1e1e1e;border-top-color:#0f0f0f;border-radius:2px"></div>
<svg class="a" style="left:544px;top:282px;" width="14" height="14" viewBox="0 0 14 14"><path d="M3.4 7.4L5.9 9.8L10.7 4.5" fill="none" stroke="#e4e4e4" stroke-width="1.6" stroke-linecap="round" stroke-linejoin="round"/></svg>
<div class="t" style="left:564px;top:282px;font-weight:bold;color:#d2d2d2;letter-spacing:.15px">Input System UI Input Module (Script)</div>
<svg class="a" style="left:883px;top:284px;" width="11" height="11" viewBox="0 0 11 11"><circle cx="5" cy="5" r="5" fill="#c4c4c4"/><path d="M3.2 3.9C3.2 2.6 4.1 2 5 2C6 2 6.8 2.6 6.8 3.6C6.8 4.7 5.3 4.8 5.3 6" fill="none" stroke="#3e3e3e" stroke-width="1.3"/><rect x="4.5" y="7" width="1.5" height="1.5" fill="#3e3e3e"/></svg>
<svg class="a" style="left:903px;top:284px;" width="12" height="11" viewBox="0 0 12 11"><path d="M0 2.5H11 M0 7.5H11" stroke="#c4c4c4" stroke-width="1.1"/><rect x="6" y="0" width="2.4" height="5.5" fill="#c4c4c4"/><rect x="3" y="5" width="2.4" height="5.5" fill="#c4c4c4"/><rect x="1.9" y="6.6" width="0.9" height="1.8" fill="#3e3e3e"/><rect x="8.6" y="1.6" width="0.9" height="1.8" fill="#3e3e3e"/></svg>
<svg class="a" style="left:927px;top:283.5px;" width="3" height="11" viewBox="0 0 3 11"><rect x="0.3" y="0" width="2.4" height="2.4" fill="#c4c4c4"/><rect x="0.3" y="4.3" width="2.4" height="2.4" fill="#c4c4c4"/><rect x="0.3" y="8.6" width="2.4" height="2.4" fill="#c4c4c4"/></svg>
<div class="t" style="left:523px;top:306px;color:#7f7f7f">Script</div>
<div class="a" style="left:681px;top:304px;width:256px;height:18px;background:#303030;border:1px solid #2b2b2b;border-radius:3px;"></div>
<div class="a" style="left:918px;top:305px;width:18px;height:16px;background:#333333;border-radius:0 2px 2px 0"></div>
<svg class="a" style="left:921px;top:307px;" width="12" height="12" viewBox="0 0 12 12"><circle cx="6" cy="6" r="4.6" fill="none" stroke="#8f8f8f" stroke-width="1"/><circle cx="6" cy="6" r="1.5" fill="#8f8f8f"/></svg>
<svg class="a" style="left:685px;top:308px;" width="10" height="11" viewBox="0 0 10 11"><path d="M1.2 2.3Q1.2 0.6 3 0.6Q4.8 0.6 4.8 2.3V3.6H1.2Z" fill="#2a62ab"/><rect x="2.5" y="4.6" width="1" height="3" fill="#555"/><rect x="4.8" y="6.6" width="2.2" height="1.1" fill="#2a62ab"/><path d="M0.8 8.8H8.2L9.2 10.6H0.8Z" fill="#555"/></svg>
<div class="t" style="left:697px;top:306px;color:#7f7f7f">InputSystemUIInputModule</div>
<div class="t" style="left:523px;top:326px;">Send Pointer Hover To Pare</div>
<div class="a" style="left:681px;top:326px;width:14px;height:14px;background:#2a2a2a;border:1px solid #1e1e1e;border-top-color:#0f0f0f;border-radius:2px"></div>
<svg class="a" style="left:681px;top:326px;" width="14" height="14" viewBox="0 0 14 14"><path d="M3.4 7.4L5.9 9.8L10.7 4.5" fill="none" stroke="#e4e4e4" stroke-width="1.6" stroke-linecap="round" stroke-linejoin="round"/></svg>
<div class="t" style="left:523px;top:346px;">Move Repeat Delay</div>
<div class="a" style="left:681px;top:344px;width:256px;height:18px;background:#2a2a2a;border:1px solid #212121;border-top-color:#0d0d0d;border-radius:3px;"></div>
<div class="t" style="left:684px;top:346px;">0.25</div>
<div class="t" style="left:523px;top:366px;">Move Repeat Rate</div>
<div class="a" style="left:681px;top:364px;width:256px;height:18px;background:#2a2a2a;border:1px solid #212121;border-top-color:#0d0d0d;border-radius:3px;"></div>
<div class="t" style="left:684px;top:366px;">0.5</div>
<div class="t" style="left:523px;top:386px;">XR Tracking Origin</div>
<div class="a" style="left:681px;top:384px;width:256px;height:18px;background:#2a2a2a;border:1px solid #1f1f1f;border-radius:3px;"></div>
<div class="a" style="left:918px;top:385px;width:18px;height:16px;background:#353535;border-radius:0 2px 2px 0"></div>
<svg class="a" style="left:921px;top:387px;" width="12" height="12" viewBox="0 0 12 12"><circle cx="6" cy="6" r="4.6" fill="none" stroke="#c4c4c4" stroke-width="1"/><circle cx="6" cy="6" r="1.5" fill="#c4c4c4"/></svg>
<div class="t" style="left:684px;top:386px;">None (Transform)</div>
<div class="t" style="left:523px;top:406px;">Deselect On Background Cl</div>
<div class="a" style="left:681px;top:406px;width:14px;height:14px;background:#2a2a2a;border:1px solid #1e1e1e;border-top-color:#0f0f0f;border-radius:2px"></div>
<svg class="a" style="left:681px;top:406px;" width="14" height="14" viewBox="0 0 14 14"><path d="M3.4 7.4L5.9 9.8L10.7 4.5" fill="none" stroke="#e4e4e4" stroke-width="1.6" stroke-linecap="round" stroke-linejoin="round"/></svg>
<div class="t" style="left:523px;top:426px;">Pointer Behavior</div>
<div class="a" style="left:682px;top:425px;width:254px;height:16px;background:#515151;border-radius:3px;box-shadow:0 1px 0 #262626"></div>
<div class="t" style="left:685px;top:425px;color:#d6d6d6">Single Mouse Or Pen But Multi Touch And</div>
<svg class="a" style="left:923px;top:431px;" width="8" height="5" viewBox="0 0 8 5"><path d="M0 0H8L4 4.6Z" fill="#cccccc"/></svg>
<div class="t" style="left:523px;top:446px;">Actions Asset</div>
<div class="a" style="left:681px;top:444px;width:256px;height:18px;background:#2a2a2a;border:1px solid #1f1f1f;border-radius:3px;"></div>
<div class="a" style="left:918px;top:445px;width:18px;height:16px;background:#353535;border-radius:0 2px 2px 0"></div>
<svg class="a" style="left:921px;top:447px;" width="12" height="12" viewBox="0 0 12 12"><circle cx="6" cy="6" r="4.6" fill="none" stroke="#c4c4c4" stroke-width="1"/><circle cx="6" cy="6" r="1.5" fill="#c4c4c4"/></svg>
<svg class="a" style="left:684px;top:447px;" width="14" height="14" viewBox="0 0 14 14"><path d="M6 1.9L10 4.1V8.9L6 11.1L2 8.9V4.1Z M2 4.1L6 6.3L10 4.1 M6 6.3V11.1" fill="none" stroke="#4c9cc4" stroke-width="1" stroke-linejoin="round"/><rect x="7.3" y="6.6" width="6.6" height="7.2" fill="#2a2a2a"/><path d="M9.6 7.3C8.8 7.3 8.8 7.8 8.8 8.8C8.8 9.7 8.5 9.9 8 9.9C8.5 9.9 8.8 10.1 8.8 11C8.8 12 8.8 12.5 9.6 12.5 M11.2 7.3C12 7.3 12 7.8 12 8.8C12 9.7 12.3 9.9 12.8 9.9C12.3 9.9 12 10.1 12 11C12 12 12 12.5 11.2 12.5" fill="none" stroke="#d85c30" stroke-width="1.1"/></svg>
<div class="t" style="left:697px;top:446px;">PlayerInputActions (Input Action Asset)</div>
<div class="t" style="left:523px;top:466px;">Point</div>
<div class="a" style="left:682px;top:465px;width:254px;height:16px;background:#515151;border-radius:3px;box-shadow:0 1px 0 #262626"></div>
<div class="t" style="left:685px;top:465px;color:#d6d6d6">None</div>
<svg class="a" style="left:923px;top:471px;" width="8" height="5" viewBox="0 0 8 5"><path d="M0 0H8L4 4.6Z" fill="#cccccc"/></svg>
<div class="t" style="left:523px;top:486px;">Left Click</div>
<div class="a" style="left:682px;top:485px;width:254px;height:16px;background:#515151;border-radius:3px;box-shadow:0 1px 0 #262626"></div>
<div class="t" style="left:685px;top:485px;color:#d6d6d6">None</div>
<svg class="a" style="left:923px;top:491px;" width="8" height="5" viewBox="0 0 8 5"><path d="M0 0H8L4 4.6Z" fill="#cccccc"/></svg>
<div class="t" style="left:523px;top:506px;">Middle Click</div>
<div class="a" style="left:682px;top:505px;width:254px;height:16px;background:#515151;border-radius:3px;box-shadow:0 1px 0 #262626"></div>
<div class="t" style="left:685px;top:505px;color:#d6d6d6">None</div>
<svg class="a" style="left:923px;top:511px;" width="8" height="5" viewBox="0 0 8 5"><path d="M0 0H8L4 4.6Z" fill="#cccccc"/></svg>
<div class="t" style="left:523px;top:526px;">Right Click</div>
<div class="a" style="left:682px;top:525px;width:254px;height:16px;background:#515151;border-radius:3px;box-shadow:0 1px 0 #262626"></div>
<div class="t" style="left:685px;top:525px;color:#d6d6d6">None</div>
<svg class="a" style="left:923px;top:531px;" width="8" height="5" viewBox="0 0 8 5"><path d="M0 0H8L4 4.6Z" fill="#cccccc"/></svg>
<div class="t" style="left:523px;top:546px;">Scroll Wheel</div>
<div class="a" style="left:682px;top:545px;width:254px;height:16px;background:#515151;border-radius:3px;box-shadow:0 1px 0 #262626"></div>
<div class="t" style="left:685px;top:545px;color:#d6d6d6">None</div>
<svg class="a" style="left:923px;top:551px;" width="8" height="5" viewBox="0 0 8 5"><path d="M0 0H8L4 4.6Z" fill="#cccccc"/></svg>
<div class="t" style="left:523px;top:566px;">Move</div>
<div class="a" style="left:682px;top:565px;width:254px;height:16px;background:#515151;border-radius:3px;box-shadow:0 1px 0 #262626"></div>
<div class="t" style="left:685px;top:565px;color:#d6d6d6">UI / Move</div>
<svg class="a" style="left:923px;top:571px;" width="8" height="5" viewBox="0 0 8 5"><path d="M0 0H8L4 4.6Z" fill="#cccccc"/></svg>
<div class="t" style="left:523px;top:586px;">Submit</div>
<div class="a" style="left:682px;top:585px;width:254px;height:16px;background:#515151;border-radius:3px;box-shadow:0 1px 0 #262626"></div>
<div class="t" style="left:685px;top:585px;color:#d6d6d6">UI / Submit</div>
<svg class="a" style="left:923px;top:591px;" width="8" height="5" viewBox="0 0 8 5"><path d="M0 0H8L4 4.6Z" fill="#cccccc"/></svg>
<div class="t" style="left:523px;top:606px;">Cancel</div>
<div class="a" style="left:682px;top:605px;width:254px;height:16px;background:#515151;border-radius:3px;box-shadow:0 1px 0 #262626"></div>
<div class="t" style="left:685px;top:605px;color:#d6d6d6">UI / Cancel</div>
<svg class="a" style="left:923px;top:611px;" width="8" height="5" viewBox="0 0 8 5"><path d="M0 0H8L4 4.6Z" fill="#cccccc"/></svg>
<div class="t" style="left:523px;top:626px;">Tracked Position</div>
<div class="a" style="left:682px;top:625px;width:254px;height:16px;background:#515151;border-radius:3px;box-shadow:0 1px 0 #262626"></div>
<div class="t" style="left:685px;top:625px;color:#d6d6d6">None</div>
<svg class="a" style="left:923px;top:631px;" width="8" height="5" viewBox="0 0 8 5"><path d="M0 0H8L4 4.6Z" fill="#cccccc"/></svg>
<div class="t" style="left:523px;top:646px;">Tracked Orientation</div>
<div class="a" style="left:682px;top:645px;width:254px;height:16px;background:#515151;border-radius:3px;box-shadow:0 1px 0 #262626"></div>
<div class="t" style="left:685px;top:645px;color:#d6d6d6">None</div>
<svg class="a" style="left:923px;top:651px;" width="8" height="5" viewBox="0 0 8 5"><path d="M0 0H8L4 4.6Z" fill="#cccccc"/></svg>
<svg class="a" style="left:512px;top:669px;" width="8" height="9" viewBox="0 0 8 9"><path d="M0 0L8 4.5L0 9Z" fill="#6d6d6d"/></svg>
<div class="t" style="left:523px;top:666px;">Advanced</div>
<div class="a" style="left:504px;top:689px;width:434px;height:1px;background:#202020"></div>
<div class="a" style="left:609px;top:699px;width:228px;height:22px;background:#585858;border-radius:3px;box-shadow:0 1px 0 #262626"></div>
<div class="t" style="left:678px;top:701px;color:#dedede">Add Component</div>
</body></html>
